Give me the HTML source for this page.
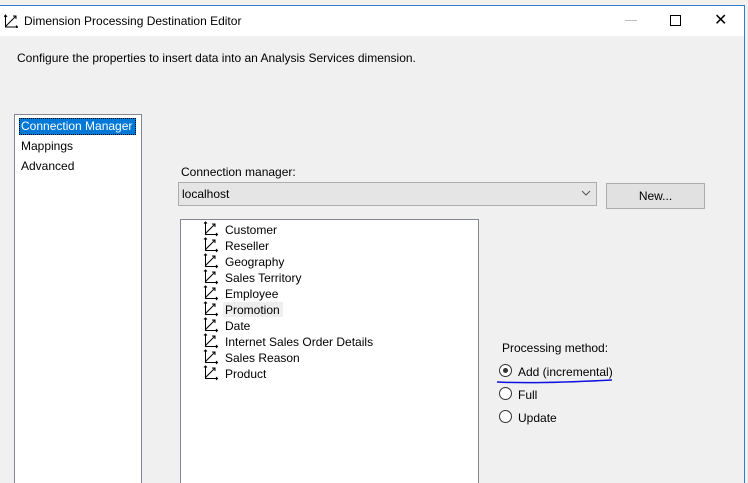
<!DOCTYPE html>
<html style="height:483px;overflow:hidden"><head><style>
body{margin:0;width:748px;height:483px;overflow:hidden;background:#f4f1ec;font-family:"Liberation Sans",sans-serif;font-size:12px;color:#000;position:relative}
.win{position:absolute;left:0;top:5px;width:744px;height:478px;border-top:1px solid #2b7fd4;border-right:1px solid #2b7fd4;background:#f0f0f0}
.title{position:absolute;left:0;top:0;width:744px;height:30px;background:#fff}
.a{position:absolute;white-space:nowrap}
.list{position:absolute;left:14px;top:114px;width:126px;height:370px;background:#fff;border:1px solid #828790;border-bottom:none}
.tree{position:absolute;left:180px;top:219px;width:297px;height:265px;background:#fff;border:1px solid #828790;border-bottom:none}
.combo{position:absolute;left:178px;top:182px;width:417px;height:22px;background:#e5e5e5;border:1px solid #adadad}
.btn{position:absolute;left:606px;top:183px;width:97px;height:24px;background:#e1e1e1;border:1px solid #adadad;text-align:center;line-height:24px}
.radio{position:absolute;width:11px;height:11px;border:1px solid #333;border-radius:50%;background:#fff}
</style></head><body>
<div class="win">
<div class="title">
<svg class="a" style="left:4px;top:8px" width="14" height="14" viewBox="0 0 14 14" fill="none" stroke="#000" stroke-width="1"><path d="M1.5 1v12h12M1.5 12.5L12 2M9 2h3v3M0 3l1.5-2 1.5 2M12 11.5l1.5 1.5-1.5 1.5"/></svg>
<div class="a" style="left:24px;top:8px;font-size:12px">Dimension Processing Destination Editor</div>
<div class="a" style="left:625px;top:14px;width:12px;height:1px;background:#bbb"></div>
<div class="a" style="left:670px;top:9px;width:9px;height:9px;border:1px solid #000"></div>
<div class="a" style="left:714px;top:4px;font-size:16px">✕</div>
</div>
</div>
<div class="a" style="left:17px;top:51px">Configure the properties to insert data into an Analysis Services dimension.</div>
<div class="list">
<div class="a" style="left:4px;top:3px;width:115px;height:17px;background:#0078d7;color:#fff;line-height:17px;outline:1px dotted #000;outline-offset:-1px;padding-left:2px">Connection Manager</div>
<div class="a" style="left:6px;top:24px">Mappings</div>
<div class="a" style="left:6px;top:44px">Advanced</div>
</div>
<div class="a" style="left:181px;top:165px">Connection manager:</div>
<div class="combo"><div class="a" style="left:3px;top:4px">localhost</div>
<svg class="a" style="left:402px;top:7px" width="10" height="6"><path d="M1 1l4 4 4-4" fill="none" stroke="#555"/></svg></div>
<div class="btn">New...</div>
<div class="tree">
<svg width="0" height="0" style="position:absolute"><defs><g id="ic" fill="none" stroke="#000" stroke-width="1"><path d="M2.5 1v12.5h12M2.5 12.5L12 3M9 3h3v3M1 2.5l1.5-1.5 1.5 1.5M13 12l1.5 1.5-1.5 1.5"/></g></defs></svg>
</div>
<div class="a" style="left:502px;top:341px">Processing method:</div>
<div class="radio" style="left:499px;top:364px"><div class="a" style="left:3px;top:3px;width:5px;height:5px;border-radius:50%;background:#333"></div></div>
<div class="a" style="left:518px;top:365px">Add (incremental)</div>
<svg class="a" style="left:496px;top:378px" width="120" height="8"><path d="M1 4Q40 6 116 2" fill="none" stroke="#1010e0" stroke-width="1.5"/></svg>
<div class="radio" style="left:499px;top:387px"></div>
<div class="a" style="left:518px;top:388px">Full</div>
<div class="radio" style="left:499px;top:410px"></div>
<div class="a" style="left:518px;top:411px">Update</div>
<div class="a" style="left:223px;top:302px;width:60px;height:15px;background:#eee"></div>
<svg class="a" style="left:203px;top:221px" width="20" height="160">
<use href="#ic" y="0"/><use href="#ic" y="16"/><use href="#ic" y="32"/><use href="#ic" y="48"/><use href="#ic" y="64"/><use href="#ic" y="80"/><use href="#ic" y="96"/><use href="#ic" y="112"/><use href="#ic" y="128"/><use href="#ic" y="144"/>
</svg>
<div class="a" style="left:225px;top:222px;line-height:16px">Customer<br>Reseller<br>Geography<br>Sales Territory<br>Employee<br>Promotion<br>Date<br>Internet Sales Order Details<br>Sales Reason<br>Product</div>
</body></html>
